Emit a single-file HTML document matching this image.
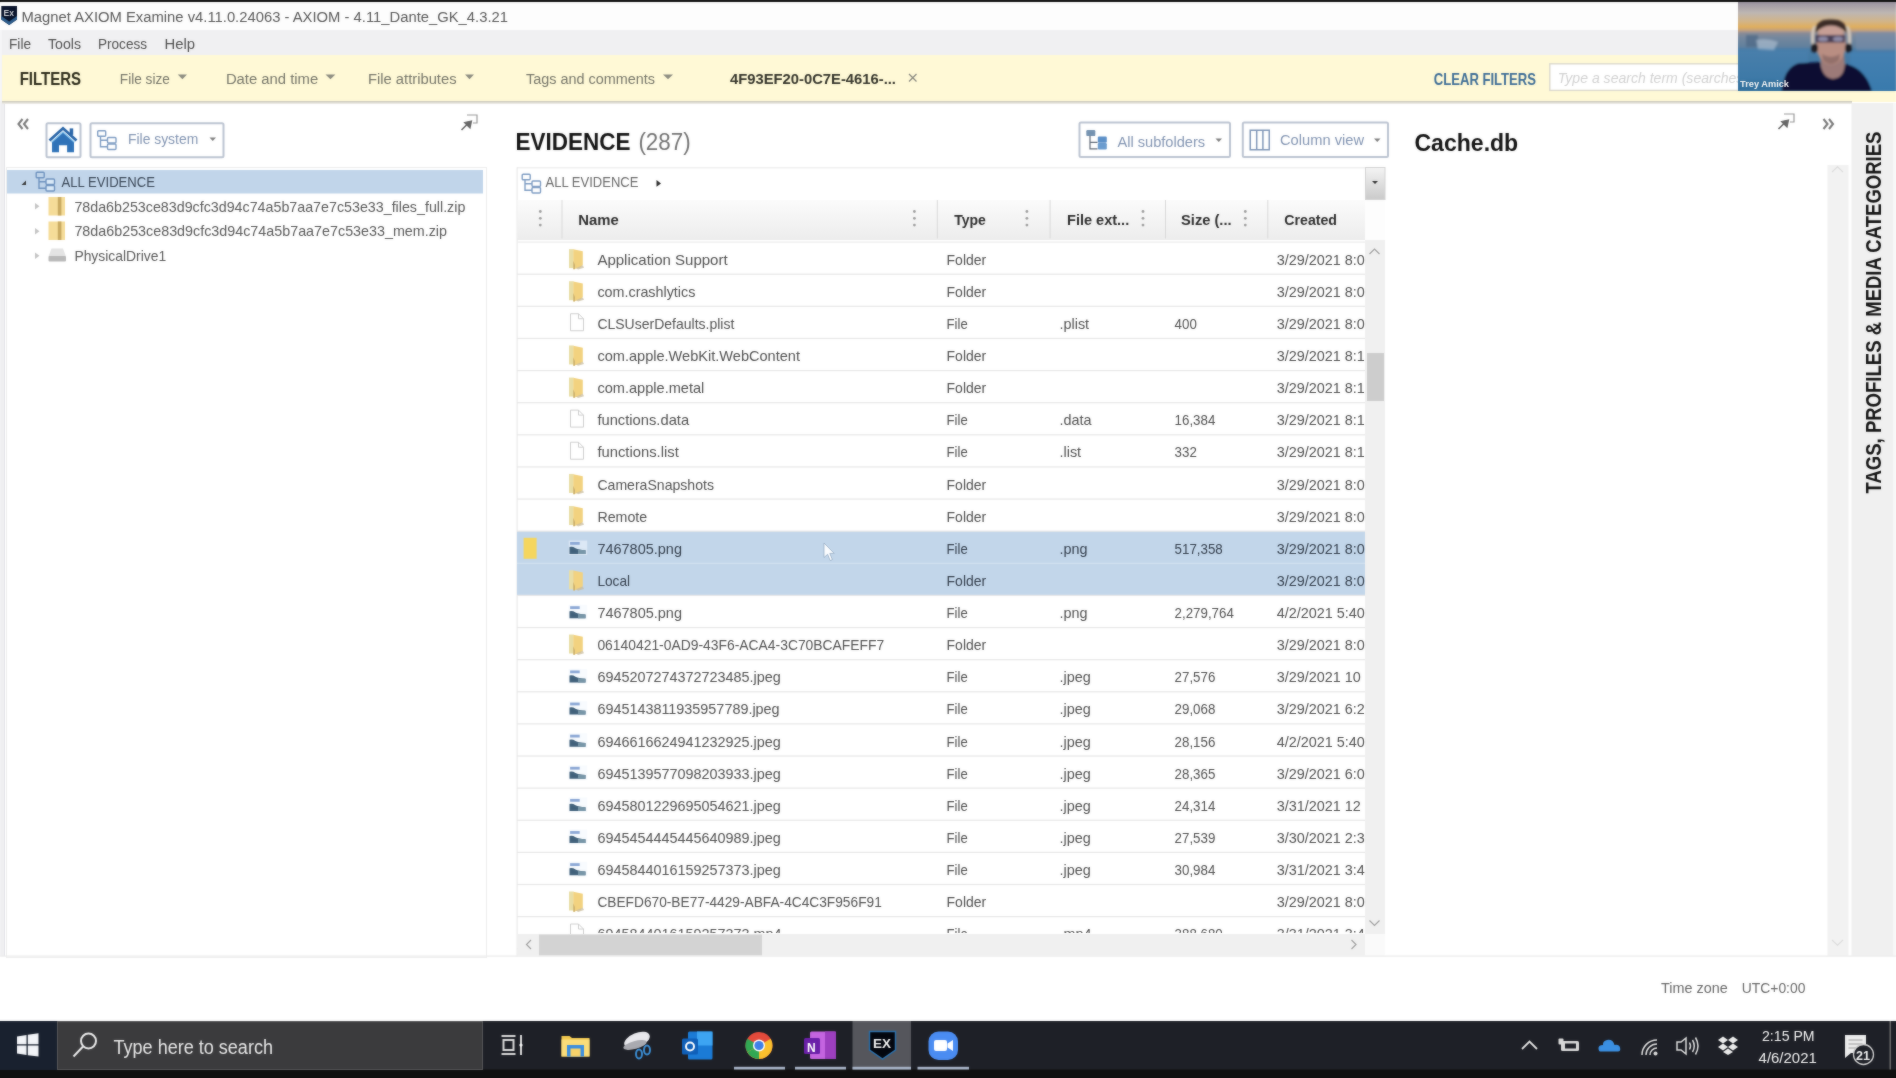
<!DOCTYPE html>
<html><head><meta charset="utf-8">
<style>
*{margin:0;padding:0;box-sizing:border-box}
html,body{width:1896px;height:1078px;overflow:hidden;background:#fff;font-family:"Liberation Sans",sans-serif}
svg{position:absolute;left:0;top:0}

</style></head><body>
<svg width="1896" height="1078" viewBox="0 0 1896 1078" font-family="Liberation Sans, sans-serif">
<defs>
  <filter id="fAll" x="-10" y="-10" width="1916" height="1098" filterUnits="userSpaceOnUse" color-interpolation-filters="sRGB"><feGaussianBlur in="SourceGraphic" stdDeviation="0.8" result="b"/><feComposite in="SourceGraphic" in2="b" operator="arithmetic" k1="0" k2="0.6" k3="0.4" k4="0"/></filter>
  <clipPath id="cpTbl"><rect x="517" y="240" width="848" height="693"/></clipPath>
  <clipPath id="cpCr"><rect x="1268" y="240" width="97" height="693"/></clipPath>
  <clipPath id="cpSearch"><rect x="1550" y="60" width="188" height="34"/></clipPath>
  <linearGradient id="gHdr" x1="0" y1="0" x2="0" y2="1"><stop offset="0" stop-color="#fbfbfb"/><stop offset="1" stop-color="#ededed"/></linearGradient>
  <linearGradient id="gShadow" x1="0" y1="0" x2="0" y2="1"><stop offset="0" stop-color="#c7c4b6"/><stop offset="1" stop-color="#f2f1ec"/></linearGradient>
  <linearGradient id="gDrop" x1="0" y1="0" x2="0" y2="1"><stop offset="0" stop-color="#f4f4f4"/><stop offset="1" stop-color="#cacaca"/></linearGradient>
</defs>
<g filter="url(#fAll)">
<rect x="-10" y="-10" width="1916" height="1098" fill="#fff"/>

<!-- ===== chrome ===== -->
<rect x="-10" y="-10" width="1916" height="12.5" fill="#151515"/>
<rect x="0" y="2" width="1896" height="28" fill="#fdfdfd"/>
<rect x="0" y="30" width="1896" height="25" fill="#f0f0f2"/>
<rect x="0" y="30" width="2" height="72" fill="#f4f4f6"/>
<rect x="0" y="101" width="5" height="855" fill="#efeff1"/>
<rect x="4" y="101" width="1" height="855" fill="#e4e4e8"/>
<rect x="2" y="55" width="1894" height="47" fill="#fff9d6"/>
<rect x="2" y="101" width="1850" height="3" fill="url(#gShadow)"/>

<!-- title icon -->
<path d="M1.3 6 H17 V19.5 L9.2 25 L1.3 19.5 Z" fill="#08122a"/>
<path d="M1.3 16 V19.5 L9.2 25 L17 19.5 V16 L9.2 21.5 Z" fill="#2b5c8c"/>
<text x="3.5" y="15.5" font-size="8.5" font-weight="bold" fill="#c9ccd2">Ex</text>

<!-- filter arrows -->
<g fill="#8c8c80"><path d="M177.8 74.5 H187 L182.4 79.2 Z"/><path d="M325.5 74.5 H335.4 L330.45 79.2 Z"/><path d="M465 74.5 H474 L469.5 79.2 Z"/><path d="M663 74.5 H673 L668 79.2 Z"/></g>
<path d="M909 74 L916.5 81.5 M916.5 74 L909 81.5" stroke="#8a8a80" stroke-width="1.3"/>
<!-- filter bar search box -->
<rect x="1549.8" y="63.8" width="200" height="26.6" fill="#fff" stroke="#dcd9cd" stroke-width="1.4"/>

<!-- ===== left panel ===== -->
<path d="M22.5 119 L18.5 124 L22.5 129 M28 119 L24 124 L28 129" fill="none" stroke="#7c7c7c" stroke-width="2.1"/>
<rect x="46.5" y="123.3" width="34" height="34" fill="#fff" stroke="#bcc4d1" stroke-width="2" rx="1.5"/>
<path d="M52 141.5 L63 131.5 L74 141.5 V152.2 H67.1 V145.2 H59 V152.2 H52 Z" fill="#2e72b8"/>
<rect x="69.7" y="128.4" width="3.5" height="6.5" fill="#2a66a8"/>
<path d="M49.5 140.5 L63 128.3 L76.5 140.5" fill="none" stroke="#2a66a8" stroke-width="2.8" stroke-linejoin="miter"/>
<path d="M51.5 142.3 L63 132 L74.5 142.3" fill="none" stroke="#8cc8f0" stroke-width="1.3"/>
<rect x="90.5" y="123.3" width="133" height="34" fill="#fff" stroke="#bcc4d1" stroke-width="2" rx="1.5"/>
<g transform="translate(97,130)" fill="none" stroke="#7f9dc3" stroke-width="1.4"><rect x="0.7" y="0.7" width="8" height="5.5" rx="1"/><rect x="10.5" y="7.5" width="8.5" height="5.5" rx="1"/><rect x="10.5" y="14" width="8.5" height="5.5" rx="1"/><path d="M3.5 6.2 V16.8 H10.5 M3.5 10.2 H10.5"/></g>
<path d="M209.5 137.5 H216 L212.75 141 Z" fill="#808080"/>
<!-- pin icon left -->
<g transform="translate(460,114)" fill="none" stroke="#9a9a9a" stroke-width="1.2"><path d="M7 1 H17 V9 H13"/><path d="M1.5 16 L7.5 10" stroke="#666" stroke-width="1.6"/><path d="M4.5 8.5 L10 14 L11.5 7 Z" fill="#666" stroke="#666"/></g>

<!-- tree box -->
<rect x="6.5" y="167.5" width="480" height="790" fill="none" stroke="#eeeeee"/>
<rect x="7" y="170" width="476" height="23.5" fill="#c1d5ea"/>
<path d="M21.5 185 L26 180.5 L26 185 Z" fill="#3a3a3a"/>
<g transform="translate(35.5,171.5)" fill="none" stroke="#6f93bf" stroke-width="1.4"><rect x="0.7" y="0.7" width="8" height="5.5" rx="1"/><rect x="10.5" y="7.5" width="8.5" height="5.5" rx="1" fill="#dcebf8"/><rect x="10.5" y="14" width="8.5" height="5.5" rx="1" fill="#dcebf8"/><path d="M3.5 6.2 V16.8 H10.5 M3.5 10.2 H10.5"/></g>
<path d="M35 203 L39.5 206.3 L35 209.6 Z" fill="#c4c4c4"/>
<path d="M35 228 L39.5 231.3 L35 234.6 Z" fill="#c4c4c4"/>
<path d="M35 252.5 L39.5 255.8 L35 259.1 Z" fill="#c4c4c4"/>
<rect x="48.5" y="197" width="16.5" height="18.5" fill="#f5dc98"/><rect x="57.8" y="197" width="3.6" height="18.5" fill="#c9aa62"/>
<rect x="48.5" y="221.5" width="16.5" height="18.5" fill="#f5dc98"/><rect x="57.8" y="221.5" width="3.6" height="18.5" fill="#c9aa62"/>
<path d="M51.5 248.5 H63 L66 256.5 H48.5 Z" fill="#e4e4e4"/><rect x="48.5" y="256" width="17.5" height="5.5" rx="1" fill="#b9b9b9"/>

<!-- ===== center ===== -->
<!-- buttons -->
<rect x="1079.5" y="122.5" width="150.5" height="34.5" fill="#fff" stroke="#bcc4d1" stroke-width="2" rx="1.5"/>
<g transform="translate(1086,129.8)"><rect x="0.3" y="0.3" width="9" height="6" rx="1.2" fill="#7492b0"/><path d="M4 6 V19 H11.5 M4 12.5 H11.5" fill="none" stroke="#606a78" stroke-width="1.2"/><rect x="11.8" y="6.8" width="9" height="6.2" rx="1.2" fill="#5c90c8"/><rect x="11.8" y="13.2" width="9" height="6.5" rx="1.2" fill="#6b9ccf"/></g>
<path d="M1215.5 138.5 H1222 L1218.75 142 Z" fill="#808080"/>
<rect x="1242.8" y="122.5" width="145.2" height="34.5" fill="#fff" stroke="#bcc4d1" stroke-width="2" rx="1.5"/>
<g transform="translate(1249.5,129.5)" fill="none" stroke="#8097b8" stroke-width="1.5"><rect x="0.75" y="0.75" width="19" height="19.5"/><path d="M7.2 0.75 V20.25 M13.4 0.75 V20.25"/></g>
<path d="M1374 138.5 H1380.5 L1377.25 142 Z" fill="#808080"/>

<!-- table frame -->
<rect x="517" y="167.3" width="868" height="1" fill="#e9e9e9"/>
<rect x="516.6" y="167.3" width="1" height="789" fill="#e6e6e6"/>
<g transform="translate(521.5,173.5)" fill="none" stroke="#7f9dc3" stroke-width="1.4"><rect x="0.7" y="0.7" width="8" height="5.5" rx="1"/><rect x="10.5" y="7.5" width="8.5" height="5.5" rx="1"/><rect x="10.5" y="14" width="8.5" height="5.5" rx="1"/><path d="M3.5 6.2 V16.8 H10.5 M3.5 10.2 H10.5"/></g>
<path d="M656.5 180 L661 183.4 L656.5 186.8 Z" fill="#2e2e2e"/>
<rect x="1365.5" y="167.5" width="19.5" height="32" fill="url(#gDrop)" stroke="#d3d3d3"/>
<path d="M1372 181 H1378 L1375 184 Z" fill="#333"/>

<!-- header -->
<rect x="517.5" y="200" width="847.5" height="38.5" fill="url(#gHdr)"/>
<rect x="517.5" y="238.5" width="847.5" height="1.2" fill="#e4e4e4"/><rect x="517.5" y="241.5" width="847.5" height="1.2" fill="#ececec"/>
<rect x="1365" y="200" width="20" height="40" fill="#fdfdfd"/>
<g fill="#d9d9d9"><rect x="561.5" y="200" width="1" height="38.5"/><rect x="936.8" y="200" width="1" height="38.5"/><rect x="1049.6" y="200" width="1" height="38.5"/><rect x="1165" y="200" width="1" height="38.5"/><rect x="1267.3" y="200" width="1" height="38.5"/></g>
<g fill="#9d9d9d">
<circle cx="540.3" cy="211.5" r="1.4"/><circle cx="540.3" cy="218.3" r="1.4"/><circle cx="540.3" cy="225.1" r="1.4"/>
<circle cx="914.4" cy="211.5" r="1.4"/><circle cx="914.4" cy="218.3" r="1.4"/><circle cx="914.4" cy="225.1" r="1.4"/>
<circle cx="1026.9" cy="211.5" r="1.4"/><circle cx="1026.9" cy="218.3" r="1.4"/><circle cx="1026.9" cy="225.1" r="1.4"/>
<circle cx="1143" cy="211.5" r="1.4"/><circle cx="1143" cy="218.3" r="1.4"/><circle cx="1143" cy="225.1" r="1.4"/>
<circle cx="1245.3" cy="211.5" r="1.4"/><circle cx="1245.3" cy="218.3" r="1.4"/><circle cx="1245.3" cy="225.1" r="1.4"/>
</g>

<!-- rows -->
<rect x="517" y="531.08" width="848" height="64.24" fill="#c2d6ea"/>
<rect x="517" y="273.62" width="848" height="1.2" fill="#e7e7e7"/><rect x="517" y="305.74" width="848" height="1.2" fill="#e7e7e7"/><rect x="517" y="337.86" width="848" height="1.2" fill="#e7e7e7"/><rect x="517" y="369.98" width="848" height="1.2" fill="#e7e7e7"/><rect x="517" y="402.10" width="848" height="1.2" fill="#e7e7e7"/><rect x="517" y="434.22" width="848" height="1.2" fill="#e7e7e7"/><rect x="517" y="466.34" width="848" height="1.2" fill="#e7e7e7"/><rect x="517" y="498.46" width="848" height="1.2" fill="#e7e7e7"/><rect x="517" y="530.58" width="848" height="1.2" fill="#e7e7e7"/><rect x="517" y="562.70" width="848" height="1.2" fill="#d2e2f0"/><rect x="517" y="594.82" width="848" height="1.2" fill="#e7e7e7"/><rect x="517" y="626.94" width="848" height="1.2" fill="#e7e7e7"/><rect x="517" y="659.06" width="848" height="1.2" fill="#e7e7e7"/><rect x="517" y="691.18" width="848" height="1.2" fill="#e7e7e7"/><rect x="517" y="723.30" width="848" height="1.2" fill="#e7e7e7"/><rect x="517" y="755.42" width="848" height="1.2" fill="#e7e7e7"/><rect x="517" y="787.54" width="848" height="1.2" fill="#e7e7e7"/><rect x="517" y="819.66" width="848" height="1.2" fill="#e7e7e7"/><rect x="517" y="851.78" width="848" height="1.2" fill="#e7e7e7"/><rect x="517" y="883.90" width="848" height="1.2" fill="#e7e7e7"/><rect x="517" y="916.02" width="848" height="1.2" fill="#e7e7e7"/><rect x="517" y="948.14" width="848" height="1.2" fill="#e7e7e7"/>
<rect x="523.6" y="537.8" width="13" height="21" fill="#f5d65e"/>
<g transform="translate(569,248.30)"><rect x="0" y="0.8" width="4.6" height="19" fill="#e8dea6"/><path d="M4.3 1 L13.8 3 V16.5 L11.5 19.2 L4.3 21 Z" fill="#f2d27f"/><path d="M4.3 12.5 Q6.8 16.5 6 21 L4.3 21 Z" fill="#c9ae6c"/><path d="M7 19.6 L13.8 17 L15 19.4 L9 21.2 Z" fill="#c8bb9c" opacity="0.75"/></g>
<g transform="translate(569,280.42)"><rect x="0" y="0.8" width="4.6" height="19" fill="#e8dea6"/><path d="M4.3 1 L13.8 3 V16.5 L11.5 19.2 L4.3 21 Z" fill="#f2d27f"/><path d="M4.3 12.5 Q6.8 16.5 6 21 L4.3 21 Z" fill="#c9ae6c"/><path d="M7 19.6 L13.8 17 L15 19.4 L9 21.2 Z" fill="#c8bb9c" opacity="0.75"/></g>
<g transform="translate(569,312.24)"><path d="M1.5 1.5 H9.5 L14.5 6.5 V18.5 H1.5 Z" fill="#fff" stroke="#cfcfcf" stroke-width="1"/><path d="M9.5 1.5 V6.5 H14.5" fill="none" stroke="#cfcfcf" stroke-width="1"/></g>
<g transform="translate(569,344.66)"><rect x="0" y="0.8" width="4.6" height="19" fill="#e8dea6"/><path d="M4.3 1 L13.8 3 V16.5 L11.5 19.2 L4.3 21 Z" fill="#f2d27f"/><path d="M4.3 12.5 Q6.8 16.5 6 21 L4.3 21 Z" fill="#c9ae6c"/><path d="M7 19.6 L13.8 17 L15 19.4 L9 21.2 Z" fill="#c8bb9c" opacity="0.75"/></g>
<g transform="translate(569,376.78)"><rect x="0" y="0.8" width="4.6" height="19" fill="#e8dea6"/><path d="M4.3 1 L13.8 3 V16.5 L11.5 19.2 L4.3 21 Z" fill="#f2d27f"/><path d="M4.3 12.5 Q6.8 16.5 6 21 L4.3 21 Z" fill="#c9ae6c"/><path d="M7 19.6 L13.8 17 L15 19.4 L9 21.2 Z" fill="#c8bb9c" opacity="0.75"/></g>
<g transform="translate(569,408.60)"><path d="M1.5 1.5 H9.5 L14.5 6.5 V18.5 H1.5 Z" fill="#fff" stroke="#cfcfcf" stroke-width="1"/><path d="M9.5 1.5 V6.5 H14.5" fill="none" stroke="#cfcfcf" stroke-width="1"/></g>
<g transform="translate(569,440.72)"><path d="M1.5 1.5 H9.5 L14.5 6.5 V18.5 H1.5 Z" fill="#fff" stroke="#cfcfcf" stroke-width="1"/><path d="M9.5 1.5 V6.5 H14.5" fill="none" stroke="#cfcfcf" stroke-width="1"/></g>
<g transform="translate(569,473.14)"><rect x="0" y="0.8" width="4.6" height="19" fill="#e8dea6"/><path d="M4.3 1 L13.8 3 V16.5 L11.5 19.2 L4.3 21 Z" fill="#f2d27f"/><path d="M4.3 12.5 Q6.8 16.5 6 21 L4.3 21 Z" fill="#c9ae6c"/><path d="M7 19.6 L13.8 17 L15 19.4 L9 21.2 Z" fill="#c8bb9c" opacity="0.75"/></g>
<g transform="translate(569,505.26)"><rect x="0" y="0.8" width="4.6" height="19" fill="#e8dea6"/><path d="M4.3 1 L13.8 3 V16.5 L11.5 19.2 L4.3 21 Z" fill="#f2d27f"/><path d="M4.3 12.5 Q6.8 16.5 6 21 L4.3 21 Z" fill="#c9ae6c"/><path d="M7 19.6 L13.8 17 L15 19.4 L9 21.2 Z" fill="#c8bb9c" opacity="0.75"/></g>
<g transform="translate(569.5,541.78)"><rect x="-0.8" y="-1.2" width="18.5" height="14.5" fill="#f2f8fd" opacity="0.55"/><rect x="0.6" y="0.2" width="9.6" height="2.8" fill="#8aa6d4"/><path d="M0 5.2 Q3 4.4 6 6.4 Q9 8 16 8.4 V12.2 H0 Z" fill="#41617b"/><path d="M8.5 7.9 Q12 8.2 16 8.4 V12.2 H8.5 Z" fill="#7695a7"/></g>
<g transform="translate(569,569.50)"><rect x="0" y="0.8" width="4.6" height="19" fill="#e8dea6"/><path d="M4.3 1 L13.8 3 V16.5 L11.5 19.2 L4.3 21 Z" fill="#f2d27f"/><path d="M4.3 12.5 Q6.8 16.5 6 21 L4.3 21 Z" fill="#c9ae6c"/><path d="M7 19.6 L13.8 17 L15 19.4 L9 21.2 Z" fill="#c8bb9c" opacity="0.75"/></g>
<g transform="translate(569.5,606.02)"><rect x="-0.8" y="-1.2" width="18.5" height="14.5" fill="#f2f8fd" opacity="0.55"/><rect x="0.6" y="0.2" width="9.6" height="2.8" fill="#8aa6d4"/><path d="M0 5.2 Q3 4.4 6 6.4 Q9 8 16 8.4 V12.2 H0 Z" fill="#41617b"/><path d="M8.5 7.9 Q12 8.2 16 8.4 V12.2 H8.5 Z" fill="#7695a7"/></g>
<g transform="translate(569,633.74)"><rect x="0" y="0.8" width="4.6" height="19" fill="#e8dea6"/><path d="M4.3 1 L13.8 3 V16.5 L11.5 19.2 L4.3 21 Z" fill="#f2d27f"/><path d="M4.3 12.5 Q6.8 16.5 6 21 L4.3 21 Z" fill="#c9ae6c"/><path d="M7 19.6 L13.8 17 L15 19.4 L9 21.2 Z" fill="#c8bb9c" opacity="0.75"/></g>
<g transform="translate(569.5,670.26)"><rect x="-0.8" y="-1.2" width="18.5" height="14.5" fill="#f2f8fd" opacity="0.55"/><rect x="0.6" y="0.2" width="9.6" height="2.8" fill="#8aa6d4"/><path d="M0 5.2 Q3 4.4 6 6.4 Q9 8 16 8.4 V12.2 H0 Z" fill="#41617b"/><path d="M8.5 7.9 Q12 8.2 16 8.4 V12.2 H8.5 Z" fill="#7695a7"/></g>
<g transform="translate(569.5,702.38)"><rect x="-0.8" y="-1.2" width="18.5" height="14.5" fill="#f2f8fd" opacity="0.55"/><rect x="0.6" y="0.2" width="9.6" height="2.8" fill="#8aa6d4"/><path d="M0 5.2 Q3 4.4 6 6.4 Q9 8 16 8.4 V12.2 H0 Z" fill="#41617b"/><path d="M8.5 7.9 Q12 8.2 16 8.4 V12.2 H8.5 Z" fill="#7695a7"/></g>
<g transform="translate(569.5,734.50)"><rect x="-0.8" y="-1.2" width="18.5" height="14.5" fill="#f2f8fd" opacity="0.55"/><rect x="0.6" y="0.2" width="9.6" height="2.8" fill="#8aa6d4"/><path d="M0 5.2 Q3 4.4 6 6.4 Q9 8 16 8.4 V12.2 H0 Z" fill="#41617b"/><path d="M8.5 7.9 Q12 8.2 16 8.4 V12.2 H8.5 Z" fill="#7695a7"/></g>
<g transform="translate(569.5,766.62)"><rect x="-0.8" y="-1.2" width="18.5" height="14.5" fill="#f2f8fd" opacity="0.55"/><rect x="0.6" y="0.2" width="9.6" height="2.8" fill="#8aa6d4"/><path d="M0 5.2 Q3 4.4 6 6.4 Q9 8 16 8.4 V12.2 H0 Z" fill="#41617b"/><path d="M8.5 7.9 Q12 8.2 16 8.4 V12.2 H8.5 Z" fill="#7695a7"/></g>
<g transform="translate(569.5,798.74)"><rect x="-0.8" y="-1.2" width="18.5" height="14.5" fill="#f2f8fd" opacity="0.55"/><rect x="0.6" y="0.2" width="9.6" height="2.8" fill="#8aa6d4"/><path d="M0 5.2 Q3 4.4 6 6.4 Q9 8 16 8.4 V12.2 H0 Z" fill="#41617b"/><path d="M8.5 7.9 Q12 8.2 16 8.4 V12.2 H8.5 Z" fill="#7695a7"/></g>
<g transform="translate(569.5,830.86)"><rect x="-0.8" y="-1.2" width="18.5" height="14.5" fill="#f2f8fd" opacity="0.55"/><rect x="0.6" y="0.2" width="9.6" height="2.8" fill="#8aa6d4"/><path d="M0 5.2 Q3 4.4 6 6.4 Q9 8 16 8.4 V12.2 H0 Z" fill="#41617b"/><path d="M8.5 7.9 Q12 8.2 16 8.4 V12.2 H8.5 Z" fill="#7695a7"/></g>
<g transform="translate(569.5,862.98)"><rect x="-0.8" y="-1.2" width="18.5" height="14.5" fill="#f2f8fd" opacity="0.55"/><rect x="0.6" y="0.2" width="9.6" height="2.8" fill="#8aa6d4"/><path d="M0 5.2 Q3 4.4 6 6.4 Q9 8 16 8.4 V12.2 H0 Z" fill="#41617b"/><path d="M8.5 7.9 Q12 8.2 16 8.4 V12.2 H8.5 Z" fill="#7695a7"/></g>
<g transform="translate(569,890.70)"><rect x="0" y="0.8" width="4.6" height="19" fill="#e8dea6"/><path d="M4.3 1 L13.8 3 V16.5 L11.5 19.2 L4.3 21 Z" fill="#f2d27f"/><path d="M4.3 12.5 Q6.8 16.5 6 21 L4.3 21 Z" fill="#c9ae6c"/><path d="M7 19.6 L13.8 17 L15 19.4 L9 21.2 Z" fill="#c8bb9c" opacity="0.75"/></g>
<g transform="translate(569,922.52)"><path d="M1.5 1.5 H9.5 L14.5 6.5 V18.5 H1.5 Z" fill="#fff" stroke="#cfcfcf" stroke-width="1"/><path d="M9.5 1.5 V6.5 H14.5" fill="none" stroke="#cfcfcf" stroke-width="1"/></g>

<!-- cursor -->
<path d="M824 543 L824 557.5 L827.6 554.3 L830.2 560.6 L832.4 559.6 L829.8 553.4 L834.2 553.4 Z" fill="#fbfdff" stroke="#8fa6bf" stroke-width="0.7"/>
<!-- vertical scrollbar -->
<rect x="1365" y="240" width="20" height="694" fill="#f0f0f0"/>
<rect x="1367" y="353" width="17" height="48" fill="#cdcdcd"/>
<path d="M1369.5 254 L1374.5 249 L1379.5 254" fill="none" stroke="#a0a0a0" stroke-width="1.2"/>
<path d="M1369.5 920.5 L1374.5 925.5 L1379.5 920.5" fill="none" stroke="#a0a0a0" stroke-width="1.2"/>
<!-- horizontal scrollbar -->
<rect x="517.5" y="934" width="867.5" height="21.5" fill="#f0f0f0"/>
<rect x="539" y="934.5" width="223" height="21" fill="#d3d3d3"/>
<path d="M531 940 L526.5 944.5 L531 949" fill="none" stroke="#a0a0a0" stroke-width="1.2"/>
<path d="M1351.5 940 L1356 944.5 L1351.5 949" fill="none" stroke="#a0a0a0" stroke-width="1.2"/>
<rect x="1365" y="934" width="20" height="22" fill="#fafafa"/>

<!-- ===== right preview ===== -->
<rect x="1827.5" y="165" width="21" height="791" fill="#f2f2f2"/>
<path d="M1832 172 L1837.5 166.8 L1843 172" fill="none" stroke="#dcdcdc" stroke-width="1.1"/>
<path d="M1832 940 L1837.5 945.2 L1843 940" fill="none" stroke="#dcdcdc" stroke-width="1.1"/>
<g transform="translate(1777,113)" fill="none" stroke="#9a9a9a" stroke-width="1.2"><path d="M7 1 H17 V9 H13"/><path d="M1.5 16 L7.5 10" stroke="#666" stroke-width="1.6"/><path d="M4.5 8.5 L10 14 L11.5 7 Z" fill="#666" stroke="#666"/></g>
<path d="M1823.5 119 L1827.5 124 L1823.5 129 M1829 119 L1833 124 L1829 129" fill="none" stroke="#7c7c7c" stroke-width="2.1"/>
<rect x="1851.5" y="103" width="41.5" height="853" fill="#f0f0f0"/>
<rect x="1893" y="103" width="3" height="853" fill="#f7f7f7"/>

<!-- bottom lines -->
<rect x="0" y="955.5" width="1896" height="1.2" fill="#ececec"/>

<!-- ===== taskbar ===== -->
<rect x="-10" y="1021" width="1916" height="49" fill="#1e2027"/>
<rect x="-10" y="1069.5" width="1916" height="20" fill="#101010"/>
<rect x="-10" y="1021" width="67.5" height="49" fill="#19212f"/>
<g fill="#f2f4f8"><path d="M17 1036.5 L26.5 1035 V1044.3 H17 Z"/><path d="M27.8 1034.8 L38.5 1033.3 V1044.3 H27.8 Z"/><path d="M17 1045.6 H26.5 V1055 L17 1053.6 Z"/><path d="M27.8 1045.6 H38.5 V1056.5 L27.8 1055.2 Z"/></g>
<rect x="57.5" y="1021.5" width="425" height="48" fill="#3b3b3d" stroke="#565658" stroke-width="1"/>
<g fill="none" stroke="#e9e9e9" stroke-width="2"><circle cx="88.5" cy="1041" r="7.5"/><path d="M83 1046.5 L73.5 1056.5"/></g>
<!-- task view -->
<g fill="none" stroke="#d8d8d8" stroke-width="2"><path d="M501.5 1036 H515.5 M501.5 1054 H515.5"/><rect x="503.5" y="1040" width="10" height="10"/><path d="M521 1035 V1055"/></g>
<circle cx="521" cy="1045" r="1.6" fill="#fff"/>
<!-- file explorer -->
<path d="M561.5 1036 H569.5 L572 1038 H589.5 V1056.5 H561.5 Z" fill="#f3c94f"/>
<rect x="561.5" y="1039.5" width="28" height="17" fill="#fbdd79"/>
<rect x="567" y="1045" width="17" height="11.5" fill="#3a8ee0"/>
<rect x="570.5" y="1048.5" width="10" height="8" fill="#f7d36a"/>
<!-- snipping -->
<ellipse cx="637" cy="1040" rx="13.5" ry="7" transform="rotate(-22 637 1040)" fill="#e8e8ec"/>
<ellipse cx="635" cy="1045" rx="12" ry="4" transform="rotate(-15 635 1045)" fill="#a9aab0"/>
<g fill="none" stroke="#3a8bd0" stroke-width="2"><ellipse cx="639" cy="1054" rx="3" ry="4.5"/><ellipse cx="647" cy="1050" rx="3" ry="4.5"/></g>
<!-- outlook -->
<rect x="688" y="1031.5" width="24.5" height="28" rx="1.5" fill="#1b7bd6"/>
<rect x="697" y="1031.5" width="15.5" height="14" fill="#3da5f2"/>
<rect x="682" y="1038.5" width="16" height="16" rx="1.5" fill="#0f5fb8"/>
<circle cx="690" cy="1046.5" r="4" fill="none" stroke="#fff" stroke-width="2"/>
<!-- chrome -->
<circle cx="759" cy="1045.5" r="13.5" fill="#e44a3b"/>
<path d="M759 1045.5 L747.3 1052.25 A13.5 13.5 0 0 1 747.3 1038.75 Z" fill="#31a853"/>
<path d="M759 1045.5 L747.3 1052.25 A13.5 13.5 0 0 0 759 1059 A13.5 13.5 0 0 0 772.5 1045.5 A13.5 13.5 0 0 0 770.7 1038.75 Z" fill="#fbc02d"/>
<path d="M759 1045.5 L759 1059 A13.5 13.5 0 0 1 747.3 1052.25 Z" fill="#31a853"/>
<circle cx="759" cy="1045.5" r="6" fill="#fff"/><circle cx="759" cy="1045.5" r="4.6" fill="#3f7fe8"/>
<!-- onenote -->
<rect x="810" y="1031.5" width="26" height="27.5" rx="1.5" fill="#c464e0"/>
<rect x="825" y="1031.5" width="11" height="27.5" fill="#9d3fbf"/>
<rect x="804" y="1038" width="16" height="16" rx="1.5" fill="#6a1fa8"/>
<text x="807" y="1051.5" font-size="12" font-weight="bold" fill="#fff">N</text>
<!-- EX active -->
<rect x="852.5" y="1021" width="58.5" height="48.5" fill="#55565c"/>
<path d="M869.5 1031.5 H895.5 V1050 L882.5 1059 L869.5 1050 Z" fill="#03060e" stroke="#2d6fa8" stroke-width="1.5"/>
<text x="873" y="1048" font-size="13" font-weight="bold" fill="#f0f0f0" textLength="18" lengthAdjust="spacingAndGlyphs">EX</text>
<!-- zoom -->
<rect x="928.5" y="1031.5" width="29.5" height="28.5" rx="10" fill="#4a8cf2"/>
<rect x="934" y="1040" width="13" height="11" rx="2" fill="#fff"/>
<path d="M947.5 1043.5 L953 1040 V1051 L947.5 1047.5 Z" fill="#fff"/>
<!-- running indicators -->
<g fill="#a9b5c9"><rect x="734" y="1066.8" width="51" height="2.7"/><rect x="795" y="1066.8" width="51" height="2.7"/><rect x="852.5" y="1066.8" width="58.5" height="2.7"/><rect x="917.5" y="1066.8" width="51.5" height="2.7"/></g>
<!-- tray -->
<path d="M1522 1049 L1529.5 1041.5 L1537 1049" fill="none" stroke="#e0e0e0" stroke-width="1.8"/>
<g fill="#d9d9d9"><rect x="1561" y="1041" width="18" height="10" rx="1.5"/><rect x="1558.5" y="1038.5" width="5" height="6" rx="1"/></g>
<rect x="1565" y="1043.5" width="11" height="5" fill="#1e2027"/>
<path d="M1600 1051.5 H1618 Q1621 1051.5 1620 1047.5 Q1619 1044 1614.5 1045 Q1613 1039 1607 1040 Q1602.5 1041 1603 1045 Q1598 1045 1598.5 1049 Q1599 1051.5 1600 1051.5 Z" fill="#3a8fe2"/>
<g fill="none" stroke="#dcdcdc" stroke-width="1.5"><path d="M1642 1055 A15 15 0 0 1 1657 1040"/><path d="M1646 1055 A11 11 0 0 1 1657 1044"/><path d="M1650 1055 A7 7 0 0 1 1657 1048"/></g>
<circle cx="1655.5" cy="1053.5" r="2" fill="#dcdcdc"/>
<g fill="none" stroke="#dcdcdc" stroke-width="1.5"><path d="M1677 1042 H1681 L1686 1038 V1054 L1681 1050 H1677 Z"/><path d="M1689.5 1042.5 Q1691.5 1046 1689.5 1049.5"/><path d="M1692.5 1040 Q1696 1046 1692.5 1052"/><path d="M1695.5 1037.5 Q1700.5 1046 1695.5 1054.5"/></g>
<g fill="#ececec"><path d="M1723 1036.5 L1718 1040 L1723 1043.5 L1728 1040 Z"/><path d="M1733 1036.5 L1728 1040 L1733 1043.5 L1738 1040 Z"/><path d="M1723 1043.5 L1718 1047 L1723 1050.5 L1728 1047 Z"/><path d="M1733 1043.5 L1728 1047 L1733 1050.5 L1738 1047 Z"/><path d="M1728 1048.5 L1723 1052 L1728 1055 L1733 1052 Z"/></g>
<path d="M1845 1035 H1866 V1053 H1851 L1845 1058 Z" fill="#ececec"/>
<g stroke="#9a9a9a" stroke-width="1"><path d="M1848.5 1040 H1862.5 M1848.5 1044 H1862.5 M1848.5 1048 H1858"/></g>
<circle cx="1863.5" cy="1054.5" r="10" fill="#1e2027" stroke="#cfcfcf" stroke-width="1.3"/>
<text x="1856" y="1059.5" font-size="12.5" font-weight="bold" fill="#f0f0f0">21</text>
<rect x="1889.5" y="1021" width="1.5" height="48.5" fill="#6a6a6a"/>

<!-- ===== texts ===== -->
<text x="21.50" y="22.30" font-size="15.2" fill="#5a5a5a" textLength="486.52" lengthAdjust="spacingAndGlyphs">Magnet AXIOM Examine v4.11.0.24063 - AXIOM - 4.11_Dante_GK_4.3.21</text>
<text x="9.00" y="49.00" font-size="15" fill="#505050" textLength="22.02" lengthAdjust="spacingAndGlyphs">File</text>
<text x="48.00" y="49.00" font-size="15" fill="#505050" textLength="32.99" lengthAdjust="spacingAndGlyphs">Tools</text>
<text x="98.00" y="49.00" font-size="15" fill="#505050" textLength="49.03" lengthAdjust="spacingAndGlyphs">Process</text>
<text x="164.50" y="49.00" font-size="15" fill="#505050" textLength="30.53" lengthAdjust="spacingAndGlyphs">Help</text>
<text x="19.70" y="84.70" font-size="18.5" fill="#2e2d1c" font-weight="bold" textLength="61.34" lengthAdjust="spacingAndGlyphs">FILTERS</text>
<text x="119.80" y="83.80" font-size="15.5" fill="#77776a" textLength="50.07" lengthAdjust="spacingAndGlyphs">File size</text>
<text x="225.90" y="83.80" font-size="15.5" fill="#77776a" textLength="92.31" lengthAdjust="spacingAndGlyphs">Date and time</text>
<text x="368.00" y="83.80" font-size="15.5" fill="#77776a" textLength="88.56" lengthAdjust="spacingAndGlyphs">File attributes</text>
<text x="526.00" y="83.80" font-size="15.5" fill="#77776a" textLength="128.98" lengthAdjust="spacingAndGlyphs">Tags and comments</text>
<text x="730.00" y="84.00" font-size="15.5" fill="#34342a" font-weight="bold" textLength="165.98" lengthAdjust="spacingAndGlyphs">4F93EF20-0C7E-4616-...</text>
<text x="1433.80" y="85.00" font-size="16.5" fill="#3f6e96" font-weight="bold" textLength="102.20" lengthAdjust="spacingAndGlyphs">CLEAR FILTERS</text>
<text x="1557.80" y="83.4" font-size="15" font-style="italic" fill="#d2d2d2" textLength="185.60" lengthAdjust="spacingAndGlyphs" clip-path="url(#cpSearch)">Type a search term (searches</text>
<text x="128.00" y="143.50" font-size="14.8" fill="#8496b3" textLength="70.22" lengthAdjust="spacingAndGlyphs">File system</text>
<text x="61.60" y="187.30" font-size="14.6" fill="#3b4858" textLength="93.37" lengthAdjust="spacingAndGlyphs">ALL EVIDENCE</text>
<text x="74.40" y="211.60" font-size="14.5" fill="#5a5a5a" textLength="390.97" lengthAdjust="spacingAndGlyphs">78da6b253ce83d9cfc3d94c74a5b7aa7e7c53e33_files_full.zip</text>
<text x="74.40" y="236.30" font-size="14.5" fill="#5a5a5a" textLength="372.63" lengthAdjust="spacingAndGlyphs">78da6b253ce83d9cfc3d94c74a5b7aa7e7c53e33_mem.zip</text>
<text x="74.40" y="261.00" font-size="14.5" fill="#5a5a5a" textLength="91.78" lengthAdjust="spacingAndGlyphs">PhysicalDrive1</text>
<text x="515.50" y="149.80" font-size="24.4" fill="#141414" font-weight="bold" textLength="114.94" lengthAdjust="spacingAndGlyphs">EVIDENCE</text>
<text x="638.40" y="149.80" font-size="24.4" fill="#737373" textLength="52.29" lengthAdjust="spacingAndGlyphs">(287)</text>
<text x="1117.40" y="147.00" font-size="14.8" fill="#8496b3" textLength="87.77" lengthAdjust="spacingAndGlyphs">All subfolders</text>
<text x="1280.00" y="144.80" font-size="14.8" fill="#8496b3" textLength="83.99" lengthAdjust="spacingAndGlyphs">Column view</text>
<text x="1414.40" y="150.80" font-size="24.5" fill="#141414" font-weight="bold" textLength="103.83" lengthAdjust="spacingAndGlyphs">Cache.db</text>
<text x="545.60" y="187.30" font-size="14.6" fill="#6a6a6a" textLength="92.77" lengthAdjust="spacingAndGlyphs">ALL EVIDENCE</text>
<text x="578.20" y="225.00" font-size="15.2" fill="#2e2e2e" font-weight="bold" textLength="40.48" lengthAdjust="spacingAndGlyphs">Name</text>
<text x="954.20" y="225.00" font-size="15.2" fill="#2e2e2e" font-weight="bold" textLength="31.60" lengthAdjust="spacingAndGlyphs">Type</text>
<text x="1067.00" y="225.00" font-size="15.2" fill="#2e2e2e" font-weight="bold" textLength="62.19" lengthAdjust="spacingAndGlyphs">File ext...</text>
<text x="1181.00" y="225.00" font-size="15.2" fill="#2e2e2e" font-weight="bold" textLength="50.60" lengthAdjust="spacingAndGlyphs">Size (...</text>
<text x="1284.30" y="225.00" font-size="15.2" fill="#2e2e2e" font-weight="bold" textLength="52.68" lengthAdjust="spacingAndGlyphs">Created</text>
<text x="597.40" y="264.70" font-size="14.4" fill="#525252" textLength="130.26" lengthAdjust="spacingAndGlyphs" clip-path="url(#cpTbl)">Application Support</text>
<text x="946.60" y="264.70" font-size="14.4" fill="#525252" textLength="39.59" lengthAdjust="spacingAndGlyphs" clip-path="url(#cpTbl)">Folder</text>
<text x="1276.80" y="264.70" font-size="14.4" fill="#525252" clip-path="url(#cpCr)">3/29/2021 8:0</text>
<text x="597.40" y="296.82" font-size="14.4" fill="#525252" textLength="97.99" lengthAdjust="spacingAndGlyphs" clip-path="url(#cpTbl)">com.crashlytics</text>
<text x="946.60" y="296.82" font-size="14.4" fill="#525252" textLength="39.59" lengthAdjust="spacingAndGlyphs" clip-path="url(#cpTbl)">Folder</text>
<text x="1276.80" y="296.82" font-size="14.4" fill="#525252" clip-path="url(#cpCr)">3/29/2021 8:0</text>
<text x="597.40" y="328.94" font-size="14.4" fill="#525252" textLength="136.92" lengthAdjust="spacingAndGlyphs" clip-path="url(#cpTbl)">CLSUserDefaults.plist</text>
<text x="946.60" y="328.94" font-size="14.4" fill="#525252" textLength="21.12" lengthAdjust="spacingAndGlyphs" clip-path="url(#cpTbl)">File</text>
<text x="1059.50" y="328.94" font-size="14.4" fill="#525252" clip-path="url(#cpTbl)">.plist</text>
<text x="1174.60" y="328.94" font-size="14.4" fill="#525252" textLength="22.22" lengthAdjust="spacingAndGlyphs" clip-path="url(#cpTbl)">400</text>
<text x="1276.80" y="328.94" font-size="14.4" fill="#525252" clip-path="url(#cpCr)">3/29/2021 8:0</text>
<text x="597.40" y="361.06" font-size="14.4" fill="#525252" textLength="202.60" lengthAdjust="spacingAndGlyphs" clip-path="url(#cpTbl)">com.apple.WebKit.WebContent</text>
<text x="946.60" y="361.06" font-size="14.4" fill="#525252" textLength="39.59" lengthAdjust="spacingAndGlyphs" clip-path="url(#cpTbl)">Folder</text>
<text x="1276.80" y="361.06" font-size="14.4" fill="#525252" clip-path="url(#cpCr)">3/29/2021 8:1</text>
<text x="597.40" y="393.18" font-size="14.4" fill="#525252" textLength="106.93" lengthAdjust="spacingAndGlyphs" clip-path="url(#cpTbl)">com.apple.metal</text>
<text x="946.60" y="393.18" font-size="14.4" fill="#525252" textLength="39.59" lengthAdjust="spacingAndGlyphs" clip-path="url(#cpTbl)">Folder</text>
<text x="1276.80" y="393.18" font-size="14.4" fill="#525252" clip-path="url(#cpCr)">3/29/2021 8:1</text>
<text x="597.40" y="425.30" font-size="14.4" fill="#525252" textLength="91.75" lengthAdjust="spacingAndGlyphs" clip-path="url(#cpTbl)">functions.data</text>
<text x="946.60" y="425.30" font-size="14.4" fill="#525252" textLength="21.12" lengthAdjust="spacingAndGlyphs" clip-path="url(#cpTbl)">File</text>
<text x="1059.50" y="425.30" font-size="14.4" fill="#525252" clip-path="url(#cpTbl)">.data</text>
<text x="1174.60" y="425.30" font-size="14.4" fill="#525252" textLength="40.74" lengthAdjust="spacingAndGlyphs" clip-path="url(#cpTbl)">16,384</text>
<text x="1276.80" y="425.30" font-size="14.4" fill="#525252" clip-path="url(#cpCr)">3/29/2021 8:1</text>
<text x="597.40" y="457.42" font-size="14.4" fill="#525252" textLength="81.36" lengthAdjust="spacingAndGlyphs" clip-path="url(#cpTbl)">functions.list</text>
<text x="946.60" y="457.42" font-size="14.4" fill="#525252" textLength="21.12" lengthAdjust="spacingAndGlyphs" clip-path="url(#cpTbl)">File</text>
<text x="1059.50" y="457.42" font-size="14.4" fill="#525252" clip-path="url(#cpTbl)">.list</text>
<text x="1174.60" y="457.42" font-size="14.4" fill="#525252" textLength="22.22" lengthAdjust="spacingAndGlyphs" clip-path="url(#cpTbl)">332</text>
<text x="1276.80" y="457.42" font-size="14.4" fill="#525252" clip-path="url(#cpCr)">3/29/2021 8:1</text>
<text x="597.40" y="489.54" font-size="14.4" fill="#525252" textLength="116.56" lengthAdjust="spacingAndGlyphs" clip-path="url(#cpTbl)">CameraSnapshots</text>
<text x="946.60" y="489.54" font-size="14.4" fill="#525252" textLength="39.59" lengthAdjust="spacingAndGlyphs" clip-path="url(#cpTbl)">Folder</text>
<text x="1276.80" y="489.54" font-size="14.4" fill="#525252" clip-path="url(#cpCr)">3/29/2021 8:0</text>
<text x="597.40" y="521.66" font-size="14.4" fill="#525252" textLength="49.82" lengthAdjust="spacingAndGlyphs" clip-path="url(#cpTbl)">Remote</text>
<text x="946.60" y="521.66" font-size="14.4" fill="#525252" textLength="39.59" lengthAdjust="spacingAndGlyphs" clip-path="url(#cpTbl)">Folder</text>
<text x="1276.80" y="521.66" font-size="14.4" fill="#525252" clip-path="url(#cpCr)">3/29/2021 8:0</text>
<text x="597.40" y="553.78" font-size="14.4" fill="#36414f" textLength="84.59" lengthAdjust="spacingAndGlyphs" clip-path="url(#cpTbl)">7467805.png</text>
<text x="946.60" y="553.78" font-size="14.4" fill="#36414f" textLength="21.12" lengthAdjust="spacingAndGlyphs" clip-path="url(#cpTbl)">File</text>
<text x="1059.50" y="553.78" font-size="14.4" fill="#36414f" clip-path="url(#cpTbl)">.png</text>
<text x="1174.60" y="553.78" font-size="14.4" fill="#36414f" textLength="48.15" lengthAdjust="spacingAndGlyphs" clip-path="url(#cpTbl)">517,358</text>
<text x="1276.80" y="553.78" font-size="14.4" fill="#36414f" clip-path="url(#cpCr)">3/29/2021 8:0</text>
<text x="597.40" y="585.90" font-size="14.4" fill="#36414f" textLength="32.61" lengthAdjust="spacingAndGlyphs" clip-path="url(#cpTbl)">Local</text>
<text x="946.60" y="585.90" font-size="14.4" fill="#36414f" textLength="39.59" lengthAdjust="spacingAndGlyphs" clip-path="url(#cpTbl)">Folder</text>
<text x="1276.80" y="585.90" font-size="14.4" fill="#36414f" clip-path="url(#cpCr)">3/29/2021 8:0</text>
<text x="597.40" y="618.02" font-size="14.4" fill="#525252" textLength="84.59" lengthAdjust="spacingAndGlyphs" clip-path="url(#cpTbl)">7467805.png</text>
<text x="946.60" y="618.02" font-size="14.4" fill="#525252" textLength="21.12" lengthAdjust="spacingAndGlyphs" clip-path="url(#cpTbl)">File</text>
<text x="1059.50" y="618.02" font-size="14.4" fill="#525252" clip-path="url(#cpTbl)">.png</text>
<text x="1174.60" y="618.02" font-size="14.4" fill="#525252" textLength="59.26" lengthAdjust="spacingAndGlyphs" clip-path="url(#cpTbl)">2,279,764</text>
<text x="1276.80" y="618.02" font-size="14.4" fill="#525252" clip-path="url(#cpCr)">4/2/2021 5:40</text>
<text x="597.40" y="650.14" font-size="14.4" fill="#525252" textLength="286.87" lengthAdjust="spacingAndGlyphs" clip-path="url(#cpTbl)">06140421-0AD9-43F6-ACA4-3C70BCAFEFF7</text>
<text x="946.60" y="650.14" font-size="14.4" fill="#525252" textLength="39.59" lengthAdjust="spacingAndGlyphs" clip-path="url(#cpTbl)">Folder</text>
<text x="1276.80" y="650.14" font-size="14.4" fill="#525252" clip-path="url(#cpCr)">3/29/2021 8:0</text>
<text x="597.40" y="682.26" font-size="14.4" fill="#525252" clip-path="url(#cpTbl)">6945207274372723485.jpeg</text>
<text x="946.60" y="682.26" font-size="14.4" fill="#525252" textLength="21.12" lengthAdjust="spacingAndGlyphs" clip-path="url(#cpTbl)">File</text>
<text x="1059.50" y="682.26" font-size="14.4" fill="#525252" clip-path="url(#cpTbl)">.jpeg</text>
<text x="1174.60" y="682.26" font-size="14.4" fill="#525252" textLength="40.74" lengthAdjust="spacingAndGlyphs" clip-path="url(#cpTbl)">27,576</text>
<text x="1276.80" y="682.26" font-size="14.4" fill="#525252" clip-path="url(#cpCr)">3/29/2021 10</text>
<text x="597.40" y="714.38" font-size="14.4" fill="#525252" clip-path="url(#cpTbl)">6945143811935957789.jpeg</text>
<text x="946.60" y="714.38" font-size="14.4" fill="#525252" textLength="21.12" lengthAdjust="spacingAndGlyphs" clip-path="url(#cpTbl)">File</text>
<text x="1059.50" y="714.38" font-size="14.4" fill="#525252" clip-path="url(#cpTbl)">.jpeg</text>
<text x="1174.60" y="714.38" font-size="14.4" fill="#525252" textLength="40.74" lengthAdjust="spacingAndGlyphs" clip-path="url(#cpTbl)">29,068</text>
<text x="1276.80" y="714.38" font-size="14.4" fill="#525252" clip-path="url(#cpCr)">3/29/2021 6:2</text>
<text x="597.40" y="746.50" font-size="14.4" fill="#525252" clip-path="url(#cpTbl)">6946616624941232925.jpeg</text>
<text x="946.60" y="746.50" font-size="14.4" fill="#525252" textLength="21.12" lengthAdjust="spacingAndGlyphs" clip-path="url(#cpTbl)">File</text>
<text x="1059.50" y="746.50" font-size="14.4" fill="#525252" clip-path="url(#cpTbl)">.jpeg</text>
<text x="1174.60" y="746.50" font-size="14.4" fill="#525252" textLength="40.74" lengthAdjust="spacingAndGlyphs" clip-path="url(#cpTbl)">28,156</text>
<text x="1276.80" y="746.50" font-size="14.4" fill="#525252" clip-path="url(#cpCr)">4/2/2021 5:40</text>
<text x="597.40" y="778.62" font-size="14.4" fill="#525252" clip-path="url(#cpTbl)">6945139577098203933.jpeg</text>
<text x="946.60" y="778.62" font-size="14.4" fill="#525252" textLength="21.12" lengthAdjust="spacingAndGlyphs" clip-path="url(#cpTbl)">File</text>
<text x="1059.50" y="778.62" font-size="14.4" fill="#525252" clip-path="url(#cpTbl)">.jpeg</text>
<text x="1174.60" y="778.62" font-size="14.4" fill="#525252" textLength="40.74" lengthAdjust="spacingAndGlyphs" clip-path="url(#cpTbl)">28,365</text>
<text x="1276.80" y="778.62" font-size="14.4" fill="#525252" clip-path="url(#cpCr)">3/29/2021 6:0</text>
<text x="597.40" y="810.74" font-size="14.4" fill="#525252" clip-path="url(#cpTbl)">6945801229695054621.jpeg</text>
<text x="946.60" y="810.74" font-size="14.4" fill="#525252" textLength="21.12" lengthAdjust="spacingAndGlyphs" clip-path="url(#cpTbl)">File</text>
<text x="1059.50" y="810.74" font-size="14.4" fill="#525252" clip-path="url(#cpTbl)">.jpeg</text>
<text x="1174.60" y="810.74" font-size="14.4" fill="#525252" textLength="40.74" lengthAdjust="spacingAndGlyphs" clip-path="url(#cpTbl)">24,314</text>
<text x="1276.80" y="810.74" font-size="14.4" fill="#525252" clip-path="url(#cpCr)">3/31/2021 12</text>
<text x="597.40" y="842.86" font-size="14.4" fill="#525252" clip-path="url(#cpTbl)">6945454445445640989.jpeg</text>
<text x="946.60" y="842.86" font-size="14.4" fill="#525252" textLength="21.12" lengthAdjust="spacingAndGlyphs" clip-path="url(#cpTbl)">File</text>
<text x="1059.50" y="842.86" font-size="14.4" fill="#525252" clip-path="url(#cpTbl)">.jpeg</text>
<text x="1174.60" y="842.86" font-size="14.4" fill="#525252" textLength="40.74" lengthAdjust="spacingAndGlyphs" clip-path="url(#cpTbl)">27,539</text>
<text x="1276.80" y="842.86" font-size="14.4" fill="#525252" clip-path="url(#cpCr)">3/30/2021 2:3</text>
<text x="597.40" y="874.98" font-size="14.4" fill="#525252" clip-path="url(#cpTbl)">6945844016159257373.jpeg</text>
<text x="946.60" y="874.98" font-size="14.4" fill="#525252" textLength="21.12" lengthAdjust="spacingAndGlyphs" clip-path="url(#cpTbl)">File</text>
<text x="1059.50" y="874.98" font-size="14.4" fill="#525252" clip-path="url(#cpTbl)">.jpeg</text>
<text x="1174.60" y="874.98" font-size="14.4" fill="#525252" textLength="40.74" lengthAdjust="spacingAndGlyphs" clip-path="url(#cpTbl)">30,984</text>
<text x="1276.80" y="874.98" font-size="14.4" fill="#525252" clip-path="url(#cpCr)">3/31/2021 3:4</text>
<text x="597.40" y="907.10" font-size="14.4" fill="#525252" textLength="284.38" lengthAdjust="spacingAndGlyphs" clip-path="url(#cpTbl)">CBEFD670-BE77-4429-ABFA-4C4C3F956F91</text>
<text x="946.60" y="907.10" font-size="14.4" fill="#525252" textLength="39.59" lengthAdjust="spacingAndGlyphs" clip-path="url(#cpTbl)">Folder</text>
<text x="1276.80" y="907.10" font-size="14.4" fill="#525252" clip-path="url(#cpCr)">3/29/2021 8:0</text>
<text x="597.40" y="939.22" font-size="14.4" fill="#525252" clip-path="url(#cpTbl)">6945844016159257373.mp4</text>
<text x="946.60" y="939.22" font-size="14.4" fill="#525252" textLength="21.12" lengthAdjust="spacingAndGlyphs" clip-path="url(#cpTbl)">File</text>
<text x="1059.50" y="939.22" font-size="14.4" fill="#525252" clip-path="url(#cpTbl)">.mp4</text>
<text x="1174.60" y="939.22" font-size="14.4" fill="#525252" textLength="48.15" lengthAdjust="spacingAndGlyphs" clip-path="url(#cpTbl)">388,680</text>
<text x="1276.80" y="939.22" font-size="14.4" fill="#525252" clip-path="url(#cpCr)">3/31/2021 3:4</text>
<text x="1661.00" y="993.20" font-size="14.3" fill="#6a6a6a" textLength="66.72" lengthAdjust="spacingAndGlyphs">Time zone</text>
<text x="1741.80" y="993.20" font-size="14.3" fill="#6a6a6a" textLength="63.61" lengthAdjust="spacingAndGlyphs">UTC+0:00</text>
<text x="113.50" y="1053.50" font-size="20" fill="#e8e8e8" textLength="159.47" lengthAdjust="spacingAndGlyphs">Type here to search</text>
<text x="1762.00" y="1040.70" font-size="15.2" fill="#f2f2f2" textLength="52.59" lengthAdjust="spacingAndGlyphs">2:15 PM</text>
<text x="1758.60" y="1063.30" font-size="15.2" fill="#f2f2f2" textLength="58.16" lengthAdjust="spacingAndGlyphs">4/6/2021</text>
<text transform="translate(1880.8,493.5) rotate(-90)" x="0" y="0" font-size="21.5" font-weight="bold" fill="#141414" textLength="361.97" lengthAdjust="spacingAndGlyphs">TAGS, PROFILES &amp; MEDIA CATEGORIES</text>

<!-- ===== webcam ===== -->
<g transform="translate(1738,2)">
  <defs>
    <linearGradient id="gSky" x1="0" y1="0" x2="0" y2="1">
      <stop offset="0" stop-color="#9a93a0"/>
      <stop offset="0.12" stop-color="#bdb6b2"/>
      <stop offset="0.22" stop-color="#d2b487"/>
      <stop offset="0.28" stop-color="#dfae5e"/>
      <stop offset="0.34" stop-color="#b39a90"/>
      <stop offset="0.40" stop-color="#7c8ea6"/>
      <stop offset="0.52" stop-color="#4a7ca6"/>
      <stop offset="1" stop-color="#2f6f9d"/>
    </linearGradient>
    <filter id="fBlur" x="-20%" y="-20%" width="140%" height="140%"><feGaussianBlur stdDeviation="1.3"/></filter>
    <clipPath id="cpCam"><rect x="0" y="0" width="158" height="89"/></clipPath>
  </defs>
  <g clip-path="url(#cpCam)">
  <rect x="0" y="0" width="158" height="89" fill="url(#gSky)"/>
  <g filter="url(#fBlur)">
    <rect x="0" y="30" width="158" height="16" fill="#6f8298" opacity="0.55"/>
    <rect x="8" y="33" width="12" height="12" fill="#4d6885" opacity="0.7"/>
    <rect x="118" y="30" width="40" height="18" fill="#7a8ea8" opacity="0.6"/>
    <path d="M18 38 Q30 36 40 40 L36 48 L20 47 Z" fill="#cfdce8" opacity="0.45"/>
    <rect x="0" y="48" width="70" height="30" fill="#4a86b4" opacity="0.35"/>
    <rect x="112" y="50" width="46" height="39" fill="#3f86bd" opacity="0.5"/>
    <!-- neck -->
    <path d="M82 52 H106 L108 76 Q95 82 84 76 Z" fill="#9c7a78"/>
    <!-- face -->
    <ellipse cx="93" cy="42" rx="15" ry="20.5" fill="#b98e82"/>
    <ellipse cx="93" cy="30" rx="12" ry="8" fill="#c9a39a" opacity="0.8"/>
    
    <!-- headphones -->
    <path d="M75.5 46 Q73 30 77 24" fill="none" stroke="#d6cbbd" stroke-width="3"/><path d="M111 46 Q113 30 109 24" fill="none" stroke="#d6cbbd" stroke-width="3"/>
    <ellipse cx="76.5" cy="46" rx="3.5" ry="4.5" fill="#1b1b24"/>
    <ellipse cx="110.5" cy="46" rx="3.5" ry="4.5" fill="#1b1b24"/>
    <path d="M77 31 Q77 16.5 93 17.5 Q109 17 109 31 Q101 23 93 23.5 Q85 23 77 31 Z" fill="#3a2c28"/>
    <!-- glasses -->
    <path d="M77.5 33 H107 V40.5 H77.5 Z" fill="#3c3550" opacity="0.9"/>
    <ellipse cx="85" cy="37" rx="5" ry="2.5" fill="#8e8aa6"/>
    <ellipse cx="100" cy="37" rx="5" ry="2.5" fill="#8e8aa6"/>
    <path d="M84 52 Q93 58 102 52 L101 58 Q93 66 85 58 Z" fill="#7a5c5a" opacity="0.6"/>
    <!-- shirt -->
    <path d="M44 89 Q46 66 60 61.5 L82 60 Q84 76 95 77 Q106 76 107 62 L114 64 Q128 70 134 89 Z" fill="#0a0c33"/>
  </g>
  <text x="2" y="84.5" font-size="9" font-weight="bold" fill="#f4f4f4" textLength="49" lengthAdjust="spacingAndGlyphs">Trey Amick</text>
  </g>
</g>
</g>
</svg>
</body></html>
